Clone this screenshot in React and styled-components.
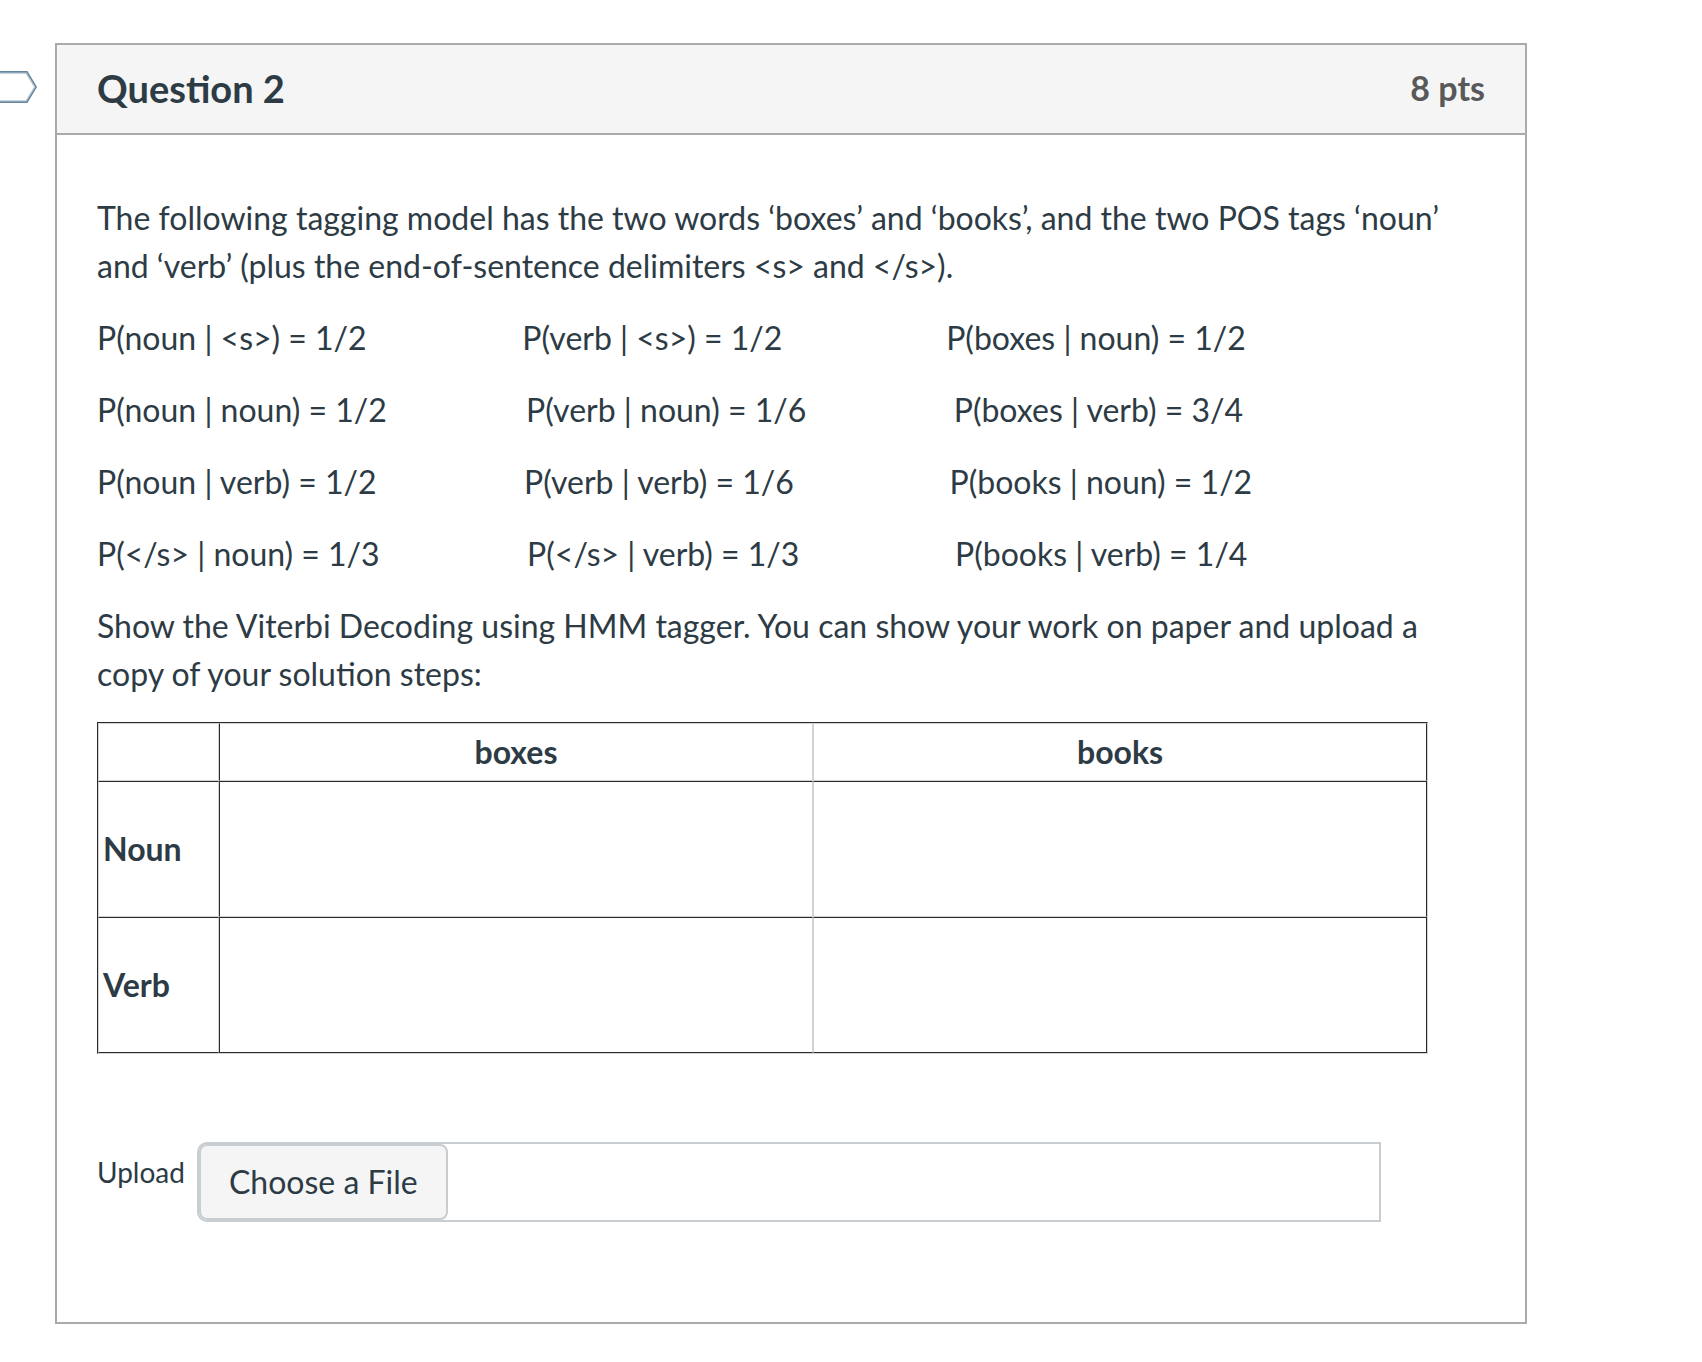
import React, { useRef, useState } from 'react';
import styled, { createGlobalStyle } from 'styled-components';

const DARK = '#2b2b2b';
const LIGHT = '#d3d3d3';

const GlobalStyle = createGlobalStyle`
  *, *::before, *::after {
    box-sizing: border-box;
  }

  body {
    margin: 0;
    background: #fff;
    color: #2d3b45;
    font-family: Lato, sans-serif;
    font-size: 32px;
    line-height: 48px;
  }
`;

const Page = styled.main`
  display: flex;
  align-items: flex-start;
  padding: 43px 175px 39px 0;
`;

const Gutter = styled.div`
  display: flex;
  flex: 0 0 55px;
  padding-top: 28px;
`;

const FlagButton = styled.button`
  display: flex;
  padding: 0;
  border: 0;
  background: none;
  cursor: pointer;
`;

const Card = styled.section`
  flex: 1;
  min-width: 0;
  border: 2px solid #aaa;
`;

const CardHeader = styled.header`
  display: flex;
  align-items: center;
  justify-content: space-between;
  height: 90px;
  padding: 0 40px 2px;
  border-bottom: 2px solid #aaa;
  background: #f5f5f5;
`;

const Title = styled.h2`
  margin: 0;
  font-size: 38px;
  font-weight: 700;
`;

const Points = styled.span`
  color: #595959;
  font-size: 34px;
  font-weight: 700;
`;

const CardBody = styled.div`
  padding: 59px 40px 100px;
`;

const Text = styled.p`
  margin: 0 0 24px;
`;

const Answer = styled.div`
  padding-right: 57px;
`;

const TagTable = styled.table`
  width: 100%;
  table-layout: fixed;
  border-collapse: separate;
  border-spacing: 0;
  border-style: solid;
  border-width: 1px;
  border-color: ${DARK} ${LIGHT} ${LIGHT} ${DARK};
`;

const Col = styled.col`
  width: ${({ $width }) => $width};
`;

const HeadCell = styled.th`
  height: 58px;
  padding: 4px;
  border: 1px solid ${LIGHT};
  border-left-color: ${({ $edge }) => ($edge === 'left' ? DARK : LIGHT)};
  border-right-color: ${({ $edge }) => ($edge === 'right' ? DARK : LIGHT)};
`;

const RowHead = styled.th`
  height: 136px;
  padding: 4px;
  border: 1px solid ${LIGHT};
  border-top-color: ${DARK};
  border-bottom-color: ${({ $last }) => ($last ? DARK : LIGHT)};
  text-align: left;
`;

const Cell = styled.td`
  padding: 4px;
  border: 1px solid ${DARK};
  border-bottom-color: ${({ $last }) => ($last ? DARK : LIGHT)};
  border-left-color: ${({ $edge }) => ($edge === 'left' ? DARK : LIGHT)};
  border-right-color: ${({ $edge }) => ($edge === 'right' ? DARK : LIGHT)};
`;

const UploadRow = styled.div`
  display: flex;
  align-items: flex-start;
  gap: 12px;
  margin-top: 88px;
  padding-right: 104px;
`;

const UploadLabel = styled.label`
  padding-top: 6px;
  font-size: 28px;
`;

const FileBox = styled.div`
  display: flex;
  flex: 1;
  height: 80px;
  border: 2px solid #c7cdd1;
  border-radius: 10px 0 0 10px;
`;

const ChooseButton = styled.button`
  padding: 0 28px;
  border: 2px solid #c7cdd1;
  border-radius: 8px;
  background: #f5f5f5;
  color: inherit;
  font: inherit;
  cursor: pointer;
`;

const FileName = styled.span`
  flex: 1;
  min-width: 0;
  padding: 14px 24px;
  overflow: hidden;
  text-overflow: ellipsis;
  white-space: nowrap;
`;

const HiddenInput = styled.input`
  display: none;
`;

const space = count => '\u00a0'.repeat(count);

const probabilities = [
  `P(noun | <s>) = 1/2${space(19)}P(verb | <s>) = 1/2${space(20)}P(boxes | noun) = 1/2`,
  `P(noun | noun) = 1/2${space(17)}P(verb | noun) = 1/6${space(18)}P(boxes | verb) = 3/4`,
  `P(noun | verb) = 1/2${space(18)}P(verb | verb) = 1/6${space(19)}P(books | noun) = 1/2`,
  `P(</s> | noun) = 1/3${space(18)}P(</s> | verb) = 1/3${space(19)}P(books | verb) = 1/4`,
];

const rows = ['Noun', 'Verb'];

const FlagIcon = () => (
  <svg width="38" height="32" viewBox="0 0 38 32" fill="none" aria-hidden="true">
    <path d="M-2 1.5H26.5L35.5 16L26.5 30.5H-2" stroke="#b4c5d2" strokeWidth="2.4" />
    <path d="M-2 0.8H27L36.2 16L27 31.2H-2" stroke="#66869e" strokeWidth="1.4" />
  </svg>
);

const FileUpload = () => {
  const inputRef = useRef(null);
  const [fileName, setFileName] = useState('');

  return (
    <UploadRow>
      <UploadLabel htmlFor="solution-file">Upload</UploadLabel>
      <FileBox>
        <ChooseButton type="button" onClick={() => inputRef.current.click()}>
          Choose a File
        </ChooseButton>
        <FileName>{fileName}</FileName>
        <HiddenInput
          id="solution-file"
          type="file"
          ref={inputRef}
          onChange={({ target }) => setFileName(target.files.length ? target.files[0].name : '')}
        />
      </FileBox>
    </UploadRow>
  );
};

const App = () => (
  <>
    <GlobalStyle />
    <Page>
      <Gutter>
        <FlagButton type="button" aria-label="Flag question">
          <FlagIcon />
        </FlagButton>
      </Gutter>
      <Card>
        <CardHeader>
          <Title>Question 2</Title>
          <Points>8 pts</Points>
        </CardHeader>
        <CardBody>
          <Text>
            The following tagging model has the two words ‘boxes’ and ‘books’, and the two POS
            tags ‘noun’ and ‘verb’ (plus the end-of-sentence delimiters &lt;s&gt; and &lt;/s&gt;).
          </Text>
          {probabilities.map(line => (
            <Text key={line}>{line}</Text>
          ))}
          <Text>
            Show the Viterbi Decoding using HMM tagger. You can show your work on paper and
            upload a copy of your solution steps:
          </Text>
          <Answer>
            <TagTable>
              <colgroup>
                <Col $width="121px" />
                <Col $width="44.7%" />
                <Col $width="auto" />
              </colgroup>
              <thead>
                <tr>
                  <HeadCell aria-label="Tag" />
                  <HeadCell scope="col" $edge="left">boxes</HeadCell>
                  <HeadCell scope="col" $edge="right">books</HeadCell>
                </tr>
              </thead>
              <tbody>
                {rows.map((name, i) => (
                  <tr key={name}>
                    <RowHead scope="row" $last={i === rows.length - 1}>{name}</RowHead>
                    <Cell $edge="left" $last={i === rows.length - 1} />
                    <Cell $edge="right" $last={i === rows.length - 1} />
                  </tr>
                ))}
              </tbody>
            </TagTable>
          </Answer>
          <FileUpload />
        </CardBody>
      </Card>
    </Page>
  </>
);

export default App;
